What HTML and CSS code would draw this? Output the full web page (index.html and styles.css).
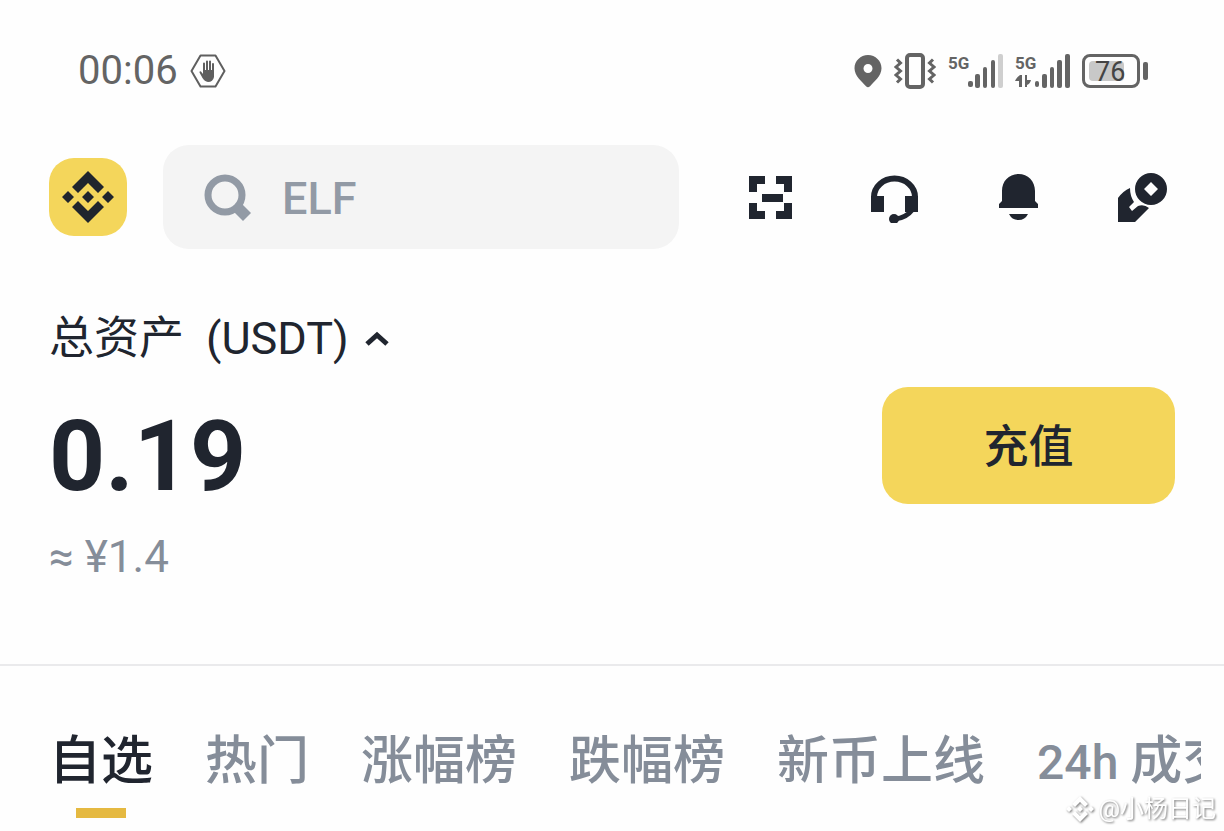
FILE: index.html
```html
<!DOCTYPE html>
<html lang="zh-CN">
	<head>
		<meta charset="UTF-8">
		<meta name="viewport" content="width=device-width, initial-scale=1">
		<title>总资产</title>
		<link rel="stylesheet" href="styles.css">
	</head>
	<body>

		<div class="status">
			<span class="time">00:06</span>
			<svg class="hand" width="36" height="34" viewBox="0 0 36 34">
				<path d="M10.500 1.500H25.500L34.500 17L25.500 32.500H10.500L1.500 17Z" fill="none" stroke="#5f5f5f" stroke-width="2" stroke-linejoin="round"/>
				<path d="M14 18V9.500M17 17V7.500M20 17V7.500M23 18V10" stroke="#5f5f5f" stroke-width="2" stroke-linecap="round"/>
				<path d="M13 16H24V23Q23 28 18 28Q14.500 27.500 12.500 24L9.500 18.500Q9.500 16.500 11 17.500L13 20Z" fill="#5f5f5f"/>
			</svg>
			<div class="indicators">
				<svg width="28" height="34" viewBox="0 0 28 34">
					<path fill-rule="evenodd" fill="#646464" d="M14 1C6.500 1 .500 7 .500 14.200C.500 22 8 27.500 12 32.300Q14 34.300 16 32.300C20 27.500 27.500 22 27.500 14.200C27.500 7 21.500 1 14 1ZM14 10A4.500 4.500 0 1 1 14 19A4.500 4.500 0 1 1 14 10Z"/>
				</svg>
				<svg class="vibrate" width="42" height="36" viewBox="0 0 42 36" fill="none" stroke="#646464">
					<rect x="13" y="2" width="16" height="32" rx="3" stroke-width="4"/>
					<path d="M3 6.500L6.500 10L2 14L6.500 18L2 22L6.500 26L3 29.500M39 6.500L35.500 10L40 14L35.500 18L40 22L35.500 26L39 29.500" stroke-width="3"/>
				</svg>
				<div class="signal">
					<div class="net">5G</div>
					<svg width="35" height="36" viewBox="0 0 35 36" fill="#646464">
						<rect x="0" y="28" width="5" height="6" rx="2"/>
						<rect x="7" y="21" width="5" height="14" rx="2"/>
						<rect x="15" y="14" width="4" height="21" rx="2"/>
						<rect x="23" y="7" width="4" height="28" rx="2"/>
						<rect x="30" y="1" width="5" height="34" rx="2" fill="#cfcfcf"/>
					</svg>
				</div>
				<div class="signal">
					<div class="net">
						5G
						<svg width="18" height="12" viewBox="0 0 18 12" fill="#646464">
							<path d="M7 0V12H4V6H0Q1 3 5 0ZM10 0H12V5H16Q15 9 12 10V12H10Z"/>
						</svg>
					</div>
					<svg width="35" height="36" viewBox="0 0 35 36" fill="#646464">
						<rect x="0" y="28" width="4" height="6" rx="2"/>
						<rect x="7" y="21" width="5" height="14" rx="2"/>
						<rect x="15" y="14" width="4" height="21" rx="2"/>
						<rect x="22" y="7" width="5" height="28" rx="2"/>
						<rect x="30" y="1" width="5" height="34" rx="2"/>
					</svg>
				</div>
				<div class="battery"><span>76</span></div>
			</div>
		</div>

		<header class="top">
			<a class="logo" href="#" aria-label="首页">
				<svg width="52" height="52" viewBox="0 0 52 52" fill="#20252d">
					<path d="M26 0L42 16L36 22L26 12L16 22L10 16ZM26 52L42 36L36 30L26 40L16 30L10 36ZM0 26L6 20L12 26L6 32ZM52 26L46 20L40 26L46 32ZM26 20L32 26L26 32L20 26Z"/>
				</svg>
			</a>
			<label class="search">
				<svg width="48" height="48" viewBox="0 0 48 48">
					<circle cx="21" cy="21" r="17" fill="none" stroke="#929aa5" stroke-width="7"/>
					<path d="M29 37L37 29L47 39L39 47Z" fill="#929aa5"/>
				</svg>
				<input type="text" placeholder="ELF" aria-label="搜索">
			</label>
			<nav class="tools">
				<button aria-label="扫一扫">
					<svg width="50" height="50" viewBox="0 0 50 50" fill="#20252f">
						<path d="M4 3H20V11H12V19H4ZM31 3H47V19H39V11H31ZM4 30H12V38H20V46H4ZM39 30H47V46H31V38H39ZM17 21H38V29H17Z"/>
					</svg>
				</button>
				<button aria-label="客服">
					<svg width="50" height="50" viewBox="0 0 50 50">
						<path d="M5 26V24A20.500 18.500 0 0 1 46 24V26" fill="none" stroke="#20252f" stroke-width="6"/>
						<path d="M2 23H15V39H2ZM36 23H49V39H36Z" fill="#20252f"/>
						<path d="M43 37Q37 45 26 46" fill="none" stroke="#20252f" stroke-width="5"/>
						<circle cx="25" cy="46" r="5" fill="#20252f"/>
					</svg>
				</button>
				<button aria-label="通知">
					<svg width="50" height="50" viewBox="0 0 50 50" fill="#20252f">
						<path d="M9 28V18C9 8 16 1 25.500 1S42 8 42 18V28L45 31V35H6V31ZM16 41H35Q32 47 25.500 47T16 41Z"/>
					</svg>
				</button>
				<button aria-label="奖励">
					<svg width="50" height="50" viewBox="0 0 50 50" fill="#20252f">
						<path fill-rule="evenodd" d="M34 0A16 16 0 1 1 34 32A16 16 0 1 1 34 0ZM34 9L27 16L34 23L41 16Z"/>
						<path d="M13 15Q13 23 17 29L12 34L15 38L21 33Q27 31 32 35L18 49H1V25Q6 18 13 15Z"/>
					</svg>
				</button>
			</nav>
		</header>

		<main class="assets">
			<div>
				<button class="title">
					<span>总资产</span>
					<span>(USDT)</span>
					<svg width="24" height="16" viewBox="0 0 24 16">
						<path d="M2 13L12 4L22 13" fill="none" stroke="#20252f" stroke-width="5"/>
					</svg>
				</button>
				<div class="amount">0.19</div>
				<div class="fiat">≈ ¥1.4</div>
			</div>
			<button class="deposit">充值</button>
		</main>

		<nav class="tabs">
			<a class="active" href="#">自选</a>
			<a href="#">热门</a>
			<a href="#">涨幅榜</a>
			<a href="#">跌幅榜</a>
			<a href="#">新币上线</a>
			<a href="#"><small>24h </small>成交额</a>
		</nav>

		<div class="mark">
			<svg width="28" height="28" viewBox="0 0 28 28">
				<path d="M14 1L22 9L19 12L14 7L9 12L6 9ZM14 27L22 19L19 16L14 21L9 16L6 19ZM0 14L3 11L6 14L3 17ZM28 14L25 11L22 14L25 17ZM14 11L17 14L14 17L11 14Z" fill="#fff"/>
			</svg>
			<span>@小杨日记</span>
		</div>

	</body>
</html>
```
FILE: styles.css
```css
body{
	margin:0;
	min-height:100vh;
	position:relative;
	background:#fefefe;
	color:#20252f;
	font-family:Roboto,"Noto Sans CJK SC",sans-serif;
	overflow-x:hidden;
}
button{
	border:0;
	padding:0;
	background:none;
	color:inherit;
	font-family:inherit;
	cursor:pointer;
}
a{
	color:inherit;
	text-decoration:none;
}
svg{
	display:block;
	flex:none;
}

.status{
	display:flex;
	align-items:center;
	height:36px;
	padding:53px 76px 0 78px;
	color:#646464;
}
.time{
	font-size:40px;
	line-height:36px;
}
.hand{
	margin-left:12px;
}
.indicators{
	display:flex;
	align-items:center;
	margin-left:auto;
}
.vibrate{
	margin:0 12px;
}
.signal{
	display:flex;
	margin-right:12px;
}
.net{
	width:20px;
	font-size:17px;
	line-height:20px;
	font-weight:700;
}
.net svg{
	margin-top:2px;
}
.battery{
	position:relative;
	box-sizing:border-box;
	width:58px;
	height:34px;
	margin-right:8px;
	padding:4px;
	border:3px solid #646464;
	border-radius:8px;
}
.battery span{
	display:block;
	width:35px;
	height:20px;
	padding-left:6px;
	box-sizing:border-box;
	border-radius:4px;
	background:#c8c8c8;
	color:#444;
	font-size:27px;
	line-height:22px;
}
.battery:after{
	content:"";
	position:absolute;
	top:5px;
	right:-11px;
	width:5px;
	height:18px;
	border-radius:2px;
	background:#646464;
}

.top{
	display:flex;
	align-items:center;
	padding:56px 57px 0 49px;
}
.logo{
	display:flex;
	align-items:center;
	justify-content:center;
	width:78px;
	height:78px;
	border-radius:25px;
	background:#f4d65b;
}
.search{
	display:flex;
	flex:1;
	align-items:center;
	box-sizing:border-box;
	min-width:0;
	height:104px;
	margin:0 66px 0 36px;
	padding:2px 41px 0;
	border-radius:26px;
	background:#f4f4f4;
}
.search input{
	flex:1;
	min-width:0;
	margin:2px 0 0 30px;
	padding:0;
	border:0;
	outline:0;
	background:none;
	color:#20252f;
	font-family:inherit;
	font-size:45px;
	font-weight:500;
	line-height:56px;
}
.search input::placeholder{
	color:#929aa5;
	opacity:1;
}
.tools{
	display:flex;
	gap:74px;
	margin-top:2px;
}

.assets{
	display:flex;
	align-items:flex-start;
	justify-content:space-between;
	padding:60px 49px 79px;
	border-bottom:2px solid #eaeaec;
}
.title{
	display:flex;
	align-items:center;
	font-size:45px;
	line-height:60px;
}
.title span{
	margin-right:16px;
}
.title span:first-child{
	margin-right:22px;
}
.amount{
	margin-top:28px;
	font-size:98px;
	line-height:120px;
	font-weight:700;
}
.fiat{
	margin-top:12px;
	color:#858d99;
	font-size:44px;
	line-height:56px;
}
.deposit{
	width:293px;
	height:117px;
	margin-top:78px;
	padding-bottom:4px;
	border-radius:26px;
	background:#f4d65b;
	font-size:45px;
	font-weight:500;
}

.tabs{
	display:flex;
	gap:52px;
	margin:62px 23px 0 0;
	padding-left:49px;
	overflow:hidden;
	color:#858d99;
	font-size:52px;
	font-weight:500;
	line-height:68px;
	white-space:nowrap;
}
.tabs small{
	font-size:48px;
}
.tabs .active{
	color:#20252f;
}
.active:after{
	content:"";
	display:block;
	width:50px;
	height:10px;
	margin:12px auto 0;
	background:#e5b941;
}

.mark{
	position:absolute;
	right:8px;
	bottom:6px;
	display:flex;
	align-items:center;
	gap:4px;
	color:#fff;
	font-size:24px;
	line-height:32px;
	filter:drop-shadow(1px 1px 1px #777);
}
```
